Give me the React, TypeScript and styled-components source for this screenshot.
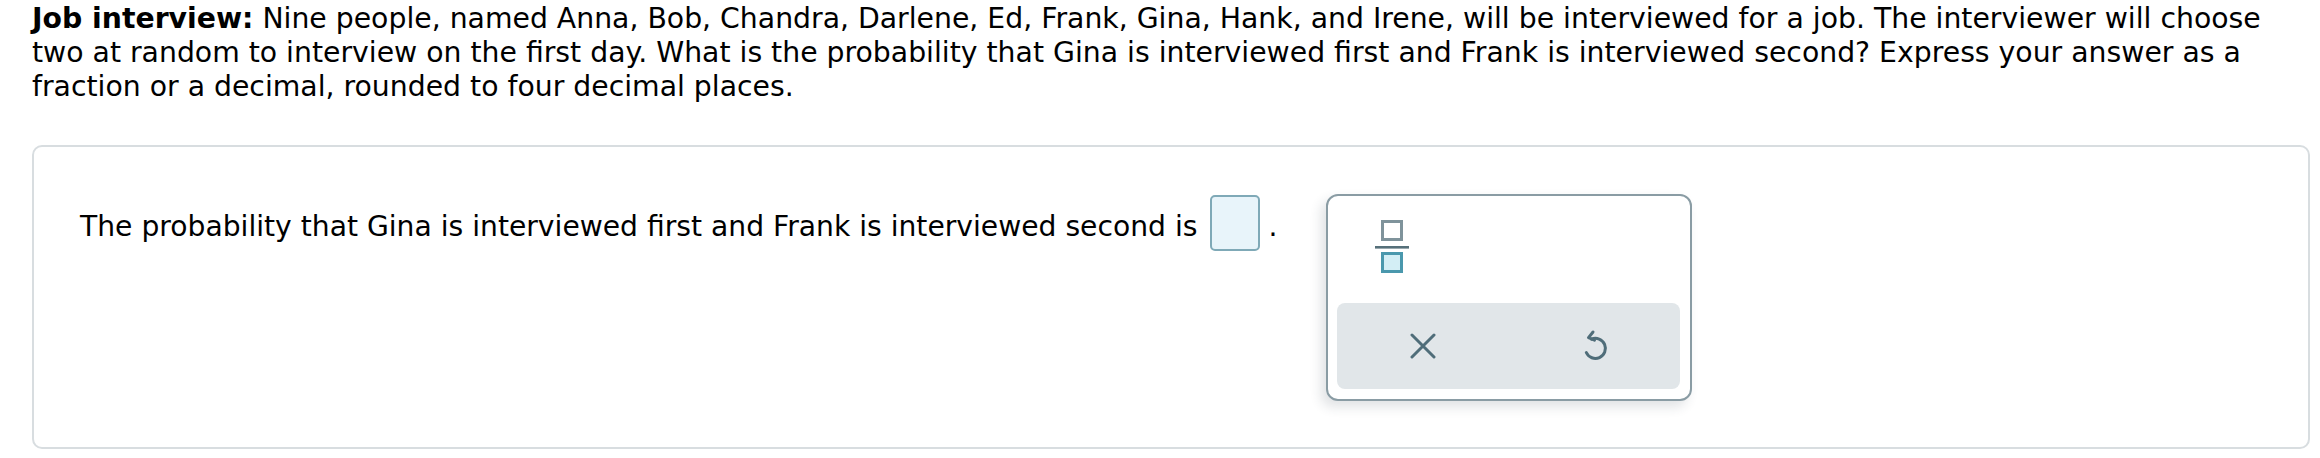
import React from "react";
import styled, { createGlobalStyle } from "styled-components";

const GlobalStyle = createGlobalStyle`
  body {
    margin: 0;
    background: #ffffff;
    color: #000000;
    font-family: "DejaVu Sans", Verdana, sans-serif;
  }
`;

const Page = styled.main`
  padding: 2px 10px 0 32px;
`;

const Question = styled.p`
  margin: 0;
  font-size: 28.3px;
  line-height: 34px;
`;

const Card = styled.section`
  margin-top: 41px;
  display: flex;
  align-items: flex-start;
  gap: 49px;
  padding: 47px 46px 46px;
  border: 2px solid #d8dde0;
  border-radius: 10px;
`;

const Sentence = styled.div`
  display: flex;
  align-items: center;
  height: 58px;
  font-size: 28.2px;
  line-height: 34px;
  white-space: nowrap;
`;

const Words = styled.span`
  margin-top: 8px;
`;

const AnswerBox = styled.span`
  display: inline-block;
  box-sizing: border-box;
  width: 50px;
  height: 56px;
  margin-left: 13px;
  background: #e8f4fa;
  border: 2px solid #7fa9b7;
  border-radius: 5px;
`;

const Period = styled.span`
  margin: 8px 0 0 8px;
`;

const Palette = styled.div`
  box-sizing: border-box;
  width: 366px;
  display: flex;
  flex-direction: column;
  padding: 0 10px 10px 9px;
  border: 2px solid #8a9ca4;
  border-radius: 12px;
  background: #ffffff;
  box-shadow: -5px 6px 12px rgba(40, 60, 70, 0.14);
`;

const FractionArea = styled.div`
  height: 107px;
  box-sizing: border-box;
  padding: 24px 0 0 38px;
`;

const Keypad = styled.div`
  height: 86px;
  display: grid;
  grid-template-columns: 1fr 1fr;
  place-items: center;
  background: #e1e6e9;
  border-radius: 8px;
`;

const KeyButton = styled.button`
  display: flex;
  align-items: center;
  justify-content: center;
  width: 60px;
  height: 60px;
  padding: 0;
  border: none;
  background: transparent;
  color: #4f6d79;
  cursor: pointer;
`;

const FractionIcon = () => (
  <svg width="34" height="54" viewBox="0 0 34 54">
    <rect x="7.5" y="1.5" width="19" height="18" fill="#ffffff" stroke="#7f939b" strokeWidth="3" />
    <rect x="0" y="26" width="34" height="2.6" fill="#56707a" />
    <rect x="7.5" y="33.5" width="19" height="18" fill="#d3eef5" stroke="#4a98ad" strokeWidth="3" />
  </svg>
);

const CloseIcon = () => (
  <svg width="26" height="26" viewBox="0 0 26 26" fill="none" stroke="currentColor" strokeWidth="3" strokeLinecap="round">
    <path d="M2 2 L24 24 M24 2 L2 24" />
  </svg>
);

const UndoIcon = () => (
  <svg width="28" height="34" viewBox="0 0 28 34" fill="none" stroke="currentColor" strokeWidth="3" strokeLinecap="round" strokeLinejoin="round">
    <path d="M10.5 10.2 A10 10 0 1 1 5.3 23.5" />
    <path d="M12 3 L7.5 8.6 L13.5 11.2" />
  </svg>
);

export default function App() {
  return (
    <>
      <GlobalStyle />
      <Page>
        <Question>
          <strong>Job interview:</strong> Nine people, named Anna, Bob, Chandra, Darlene, Ed, Frank, Gina, Hank, and
          Irene, will be interviewed for a job. The interviewer will choose two at random to interview on the first day.
          What is the probability that Gina is interviewed first and Frank is interviewed second? Express your answer as
          a fraction or a decimal, rounded to four decimal places.
        </Question>
        <Card>
          <Sentence>
            <Words>The probability that Gina is interviewed first and Frank is interviewed second is</Words>
            <AnswerBox />
            <Period>.</Period>
          </Sentence>
          <Palette>
            <FractionArea>
              <FractionIcon />
            </FractionArea>
            <Keypad>
              <KeyButton aria-label="Clear">
                <CloseIcon />
              </KeyButton>
              <KeyButton aria-label="Undo">
                <UndoIcon />
              </KeyButton>
            </Keypad>
          </Palette>
        </Card>
      </Page>
    </>
  );
}
